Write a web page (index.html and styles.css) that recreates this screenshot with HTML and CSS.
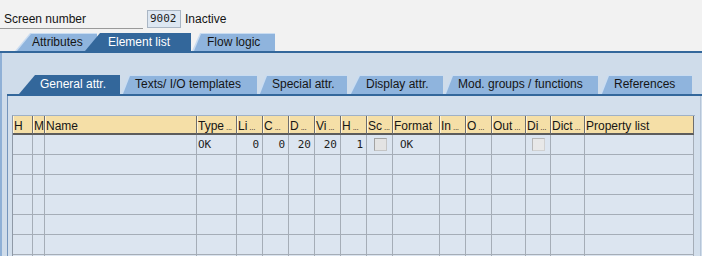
FILE: index.html
```html
<!DOCTYPE html>
<html>
<head>
<meta charset="utf-8">
<title>Screen 9002 - Element list</title>
<link rel="stylesheet" href="styles.css">
</head>
<body>
<div class="screen">
  <div class="field-row">
    <span class="label">Screen number</span>
    <span class="input">9002</span>
    <span class="status">Inactive</span>
  </div>

  <div class="tabstrip main-tabs">
    <div class="tab t-attr">Attributes</div>
    <div class="tab active t-elem">Element list</div>
    <div class="tab t-flow">Flow logic</div>
  </div>

  <div class="panel">
    <div class="tabstrip sub-tabs">
      <div class="tab active t-gen">General attr.</div>
      <div class="tab t-text">Texts/ I/O templates</div>
      <div class="tab t-spec">Special attr.</div>
      <div class="tab t-disp">Display attr.</div>
      <div class="tab t-mod">Mod. groups / functions</div>
      <div class="tab t-ref">References</div>
    </div>

    <div class="subpanel">
      <div class="grid">
        <div class="row head">
          <div class="hc">H</div>
          <div class="hc">M</div>
          <div class="hc">Name</div>
          <div class="hc">Type<span class="dots">...</span></div>
          <div class="hc">Li<span class="dots">...</span></div>
          <div class="hc">C<span class="dots">...</span></div>
          <div class="hc">D<span class="dots">...</span></div>
          <div class="hc">Vi<span class="dots">...</span></div>
          <div class="hc">H<span class="dots">...</span></div>
          <div class="hc">Sc<span class="dots">...</span></div>
          <div class="hc">Format</div>
          <div class="hc">In<span class="dots">...</span></div>
          <div class="hc">O<span class="dots">...</span></div>
          <div class="hc">Out<span class="dots">...</span></div>
          <div class="hc">Di<span class="dots">...</span></div>
          <div class="hc">Dict<span class="dots">...</span></div>
          <div class="hc">Property list</div>
        </div>

        <div class="row">
          <div class="c"></div><div class="c"></div><div class="c"></div>
          <div class="c txt">OK</div>
          <div class="c num">0</div>
          <div class="c num">0</div>
          <div class="c num">20</div>
          <div class="c num">20</div>
          <div class="c num">1</div>
          <div class="c chk"><span class="box"></span></div>
          <div class="c fmt">OK</div>
          <div class="c"></div><div class="c"></div><div class="c"></div>
          <div class="c chk"><span class="box dis"></span></div>
          <div class="c"></div><div class="c"></div>
        </div>

        <div class="row">
          <div class="c"></div><div class="c"></div><div class="c"></div><div class="c"></div><div class="c"></div><div class="c"></div><div class="c"></div><div class="c"></div><div class="c"></div><div class="c"></div><div class="c"></div><div class="c"></div><div class="c"></div><div class="c"></div><div class="c"></div><div class="c"></div><div class="c"></div>
        </div>
        <div class="row">
          <div class="c"></div><div class="c"></div><div class="c"></div><div class="c"></div><div class="c"></div><div class="c"></div><div class="c"></div><div class="c"></div><div class="c"></div><div class="c"></div><div class="c"></div><div class="c"></div><div class="c"></div><div class="c"></div><div class="c"></div><div class="c"></div><div class="c"></div>
        </div>
        <div class="row">
          <div class="c"></div><div class="c"></div><div class="c"></div><div class="c"></div><div class="c"></div><div class="c"></div><div class="c"></div><div class="c"></div><div class="c"></div><div class="c"></div><div class="c"></div><div class="c"></div><div class="c"></div><div class="c"></div><div class="c"></div><div class="c"></div><div class="c"></div>
        </div>
        <div class="row">
          <div class="c"></div><div class="c"></div><div class="c"></div><div class="c"></div><div class="c"></div><div class="c"></div><div class="c"></div><div class="c"></div><div class="c"></div><div class="c"></div><div class="c"></div><div class="c"></div><div class="c"></div><div class="c"></div><div class="c"></div><div class="c"></div><div class="c"></div>
        </div>
        <div class="row">
          <div class="c"></div><div class="c"></div><div class="c"></div><div class="c"></div><div class="c"></div><div class="c"></div><div class="c"></div><div class="c"></div><div class="c"></div><div class="c"></div><div class="c"></div><div class="c"></div><div class="c"></div><div class="c"></div><div class="c"></div><div class="c"></div><div class="c"></div>
        </div>
        <div class="row">
          <div class="c"></div><div class="c"></div><div class="c"></div><div class="c"></div><div class="c"></div><div class="c"></div><div class="c"></div><div class="c"></div><div class="c"></div><div class="c"></div><div class="c"></div><div class="c"></div><div class="c"></div><div class="c"></div><div class="c"></div><div class="c"></div><div class="c"></div>
        </div>
      </div>
    </div>
  </div>
</div>
</body>
</html>
```

FILE: styles.css
```css
html, body {
  margin: 0;
  padding: 0;
  background: #f2f2f2;
  overflow: hidden;
}

.screen {
  width: 702px;
  height: 256px;
  overflow: hidden;
  font-family: "Liberation Sans", Arial, sans-serif;
  font-size: 12px;
  color: #141414;
}

/* ---------- top field row ---------- */
.field-row {
  display: flex;
  align-items: flex-end;
  height: 29px;
}

.label {
  box-sizing: border-box;
  width: 143px;
  padding-left: 4px;
  line-height: 17px;
  border-bottom: 1px solid #9a9a9a;
}

.input {
  box-sizing: border-box;
  width: 34px;
  height: 18px;
  margin-left: 4px;
  margin-bottom: 1px;
  padding-left: 2px;
  border: 1px solid #aab6c4;
  background: #dde7f2;
  font-family: "DejaVu Sans Mono", "Liberation Mono", monospace;
  font-size: 11px;
  line-height: 16px;
  color: #1c1c1c;
}

.status {
  margin-left: 4px;
  margin-bottom: 1px;
  line-height: 17px;
}

/* ---------- tab strips ---------- */
.tabstrip {
  display: flex;
  align-items: flex-end;
  border-bottom: 2px solid #33679b;
}

.main-tabs {
  margin-top: 4px;
  padding-left: 15px;
  height: 18px;
}

.sub-tabs {
  margin-left: 5px;
  padding-left: 12px;
  height: 19px;
}

.tab {
  --s: 8px;
  position: relative;
  box-sizing: border-box;
  flex: none;
  height: 100%;
  line-height: 18px;
  white-space: nowrap;
  color: #151515;
  background: #c9dcf1;
  clip-path: polygon(0 100%, var(--s) 0, 100% 0, 100% 100%);
}

.tab::before {
  content: "";
  position: absolute;
  inset: 0;
  z-index: -1;
  background: #8fb4dd;
  clip-path: polygon(2px 100%, calc(var(--s) + 1px) 1px, 100% 1px, 100% 100%);
}

.tab.active {
  background: #33679b;
  color: #ffffff;
  z-index: 1;
}

.tab.active::before {
  display: none;
}

.sub-tabs .tab {
  line-height: 19px;
}

.t-attr { width: 82px; --s: 15px; padding-left: 17px; }
.t-elem { width: 106px; --s: 15px; padding-left: 23px; margin-left: -12px; }
.t-flow { width: 83px; --s: 8px; padding-left: 15px; margin-left: 1px; }

.t-gen  { width: 101px; --s: 16px; padding-left: 21px; }
.t-text { width: 136px; --s: 8px; padding-left: 14px; margin-left: 1px; }
.t-spec { width: 89px;  --s: 8px; padding-left: 14px; margin-left: 1px; }
.t-disp { width: 94px;  --s: 10px; padding-left: 17px; margin-left: 2px; }
.t-mod  { width: 154px; --s: 8px; padding-left: 14px; margin-left: 1px; }
.t-ref  { width: 92px;  --s: 8px; padding-left: 14px; margin-left: 2px; }

/* ---------- panels ---------- */
.panel {
  height: 203px;
  box-sizing: border-box;
  padding-top: 22px;
  background: #cfdcea;
  border-left: 2px solid #8fb0d6;
}

.subpanel {
  margin-left: 5px;
  margin-right: 1px;
  height: 200px;
  box-sizing: border-box;
  padding: 19px 0 0 4px;
  background: #d3dfec;
  border-left: 1px solid #7595bc;
  border-right: 1px solid #b5c5d8;
}

/* ---------- table ---------- */
.grid {
  width: 682px;
  border-left: 1px solid #8f99a6;
  border-top: 1px solid #9fb1c6;
}

.row {
  display: grid;
  grid-template-columns: 20px 12px 152px 40px 26px 26px 26px 26px 26px 26px 47px 26px 26px 34px 25px 34px 109px;
}

.hc {
  box-sizing: border-box;
  height: 19px;
  padding: 2px 0 0 1px;
  line-height: 16px;
  white-space: nowrap;
  overflow: hidden;
  background: #f5dfa7;
  border-right: 1px solid #6e6e6e;
  border-bottom: 2px solid #5c5c5c;
  box-shadow: inset 1px 0 0 #fff4d6;
  color: #161616;
}

.dots {
  font-size: 8px;
  letter-spacing: -0.3px;
  margin-left: 2px;
}

.c {
  box-sizing: border-box;
  height: 20px;
  display: flex;
  align-items: center;
  background: #dce5f0;
  border-right: 1px solid #a5adb7;
  border-bottom: 1px solid #a5adb7;
  font-family: "DejaVu Sans Mono", "Liberation Mono", monospace;
  font-size: 11px;
  color: #1e1e1e;
}

.txt { padding-left: 1px; }
.fmt { padding-left: 7px; }
.num { justify-content: flex-end; padding-right: 3px; }
.chk { justify-content: center; }

.box {
  box-sizing: border-box;
  width: 13px;
  height: 13px;
  margin-left: 1px;
  background: #e3e3e3;
  border: 1px solid #a3a3a3;
  border-right-color: #c4c4c4;
  border-bottom-color: #c4c4c4;
}

.box.dis {
  background: #e8e8e8;
  border-color: #b8b8b8 #d0d0d0 #d0d0d0 #b8b8b8;
}
```
